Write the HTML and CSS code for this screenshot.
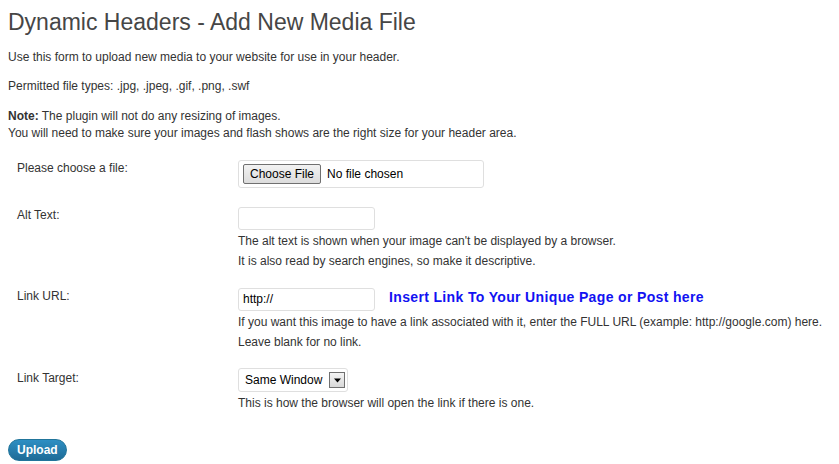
FILE: index.html
```html
<!DOCTYPE html>
<html>
<head>
<meta charset="utf-8">
<link rel="stylesheet" href="styles.css">
</head>
<body>
<div class="wrap">
  <h2 class="title">Dynamic Headers - Add New Media File</h2>
  <p class="intro">Use this form to upload new media to your website for use in your header.</p>
  <p class="intro">Permitted file types: .jpg, .jpeg, .gif, .png, .swf</p>
  <p class="intro note"><strong>Note:</strong> The plugin will not do any resizing of images.<br>You will need to make sure your images and flash shows are the right size for your header area.</p>

  <div class="form">
    <div class="row row-file">
      <div class="label">Please choose a file:</div>
      <div class="field">
        <div class="filebox"><span class="filebtn">Choose File</span><span class="filename">No file chosen</span></div>
      </div>
    </div>
    <div class="row row-alt">
      <div class="label">Alt Text:</div>
      <div class="field">
        <div class="textbox"></div>
        <div class="desc first">The alt text is shown when your image can't be displayed by a browser.</div>
        <div class="desc">It is also read by search engines, so make it descriptive.</div>
      </div>
    </div>
    <div class="row row-url">
      <div class="label">Link URL:</div>
      <div class="field">
        <div class="inline">
          <div class="textbox">http://</div>
          <span class="hint">Insert Link To Your Unique Page or Post here</span>
        </div>
        <div class="desc first">If you want this image to have a link associated with it, enter the FULL URL (example: http://google.com) here.</div>
        <div class="desc">Leave blank for no link.</div>
      </div>
    </div>
    <div class="row row-target">
      <div class="label">Link Target:</div>
      <div class="field">
        <div class="selectbox"><span class="selval">Same Window</span><span class="selarrow"><svg width="9" height="5" viewBox="0 0 9 5"><path d="M1 0.5h7L4.5 4.5z" fill="#000"/></svg></span></div>
        <div class="desc first">This is how the browser will open the link if there is one.</div>
      </div>
    </div>
  </div>

  <div class="submit"><span class="btn">Upload</span></div>
</div>
</body>
</html>
```

FILE: styles.css
```css
html, body {
  margin: 0;
  padding: 0;
  background: #fff;
}
body {
  font-family: "Liberation Sans", Arial, sans-serif;
  font-size: 12px;
  color: #333;
}
.wrap {
  padding: 0 8px;
}
.title {
  margin: 0;
  padding: 8px 0 0 0;
  font-size: 23px;
  font-weight: normal;
  color: #464646;
  line-height: 29px;
  height: 29px;
}
.intro {
  margin: 12px 0 0 0;
  line-height: 17px;
}
.intro.note {
  margin-top: 13px;
}
.intro strong {
  font-weight: bold;
}
.form {
  margin-top: 18px;
}
.row {
  display: flex;
}
.label {
  width: 221px;
  padding: 0 0 0 9px;
  line-height: 17px;
  flex: none;
}
.row-file { height: 47px; }
.row-alt { height: 81px; }
.row-url { height: 80px; }
.row-target .label { padding-top: 2px; }
.filebox {
  box-sizing: border-box;
  width: 246px;
  height: 28px;
  border: 1px solid #dfdfdf;
  border-radius: 3px;
  display: flex;
  align-items: center;
  padding-left: 4px;
}
.filebtn {
  display: inline-block;
  height: 18px;
  line-height: 18px;
  padding: 0 6px;
  border: 1px solid #707070;
  border-radius: 2px;
  background: linear-gradient(#f2f2f2, #dcdcdc);
  color: #000;
  font-size: 12px;
}
.filename {
  margin-left: 6px;
  color: #000;
}
.textbox {
  box-sizing: border-box;
  width: 137px;
  height: 23px;
  border: 1px solid #dfdfdf;
  border-radius: 3px;
  line-height: 21px;
  padding-left: 4px;
  color: #000;
}
.desc {
  line-height: 20px;
}
.desc.first {
  margin-top: 1px;
}
.inline {
  display: flex;
  align-items: flex-start;
}
.hint {
  margin-left: 14px;
  font-size: 14px;
  font-weight: bold;
  color: #1212f2;
  line-height: 18px;
  letter-spacing: 0.35px;
}
.selectbox {
  box-sizing: border-box;
  width: 110px;
  height: 24px;
  border: 1px solid #dfdfdf;
  border-radius: 3px;
  display: flex;
  align-items: center;
  padding-left: 6px;
  color: #000;
}
.selval {
  flex: 1;
}
.selarrow {
  width: 16px;
  height: 16px;
  box-sizing: border-box;
  border: 1px solid #707070;
  background: linear-gradient(#f4f4f4, #d8d8d8);
  margin-right: 2px;
  display: flex;
  align-items: center;
  justify-content: center;
}
.submit {
  margin-top: 26px;
}
.btn {
  display: inline-block;
  height: 20px;
  line-height: 20px;
  padding: 0 8px;
  border-radius: 11px;
  background: linear-gradient(#2e8fc3, #1e6b97);
  border: 1px solid #21759b;
  color: #fff;
  font-weight: bold;
  font-size: 12px;
}
```
